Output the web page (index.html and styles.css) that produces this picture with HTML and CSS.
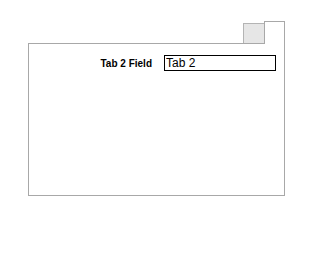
FILE: index.html
```html
<!DOCTYPE html>
<html>
<head>
<meta charset="utf-8">
<title>Tab 2</title>
<link rel="stylesheet" href="styles.css">
</head>
<body>
    <div class="wrap">
        <div class="tabs">
            <span class="tab"></span>
            <span class="tab active"></span>
        </div>
        <div class="panel">
            <div class="row">
                <label class="label" for="f2">Tab 2 Field</label>
                <input id="f2" class="field" type="text" value="Tab 2">
            </div>
        </div>
    </div>
</body>
</html>
```

FILE: styles.css
```css
* { margin: 0; padding: 0; box-sizing: border-box; }
body { background: #fff; font-family: "Liberation Sans", Arial, sans-serif; }
.wrap { width: 285px; padding: 21px 0 0 28px; }
.tabs { display: flex; justify-content: flex-end; align-items: flex-end; height: 22px; }
.tab { display: block; width: 21px; height: 20px; background: #e6e6e6; border: 1px solid #b4b4b4; border-right: none; border-bottom: none; }
.tab.active { position: relative; width: 21px; height: 23px; margin-bottom: -1px; background: #fff; border: 1px solid #a8a8a8; border-bottom: none; }
.panel { height: 153px; border: 1px solid #a8a8a8; }
.row { display: flex; align-items: center; margin-top: 11px; }
.label { width: 124px; padding-right: 1px; text-align: right; font-size: 10px; font-weight: bold; color: #000; }
.field { width: 112px; height: 16px; margin-left: 11px; padding: 0 1px; border: 1px solid #000; font-family: "Liberation Sans", Arial, sans-serif; font-size: 12px; color: #000; outline: none; }
```
